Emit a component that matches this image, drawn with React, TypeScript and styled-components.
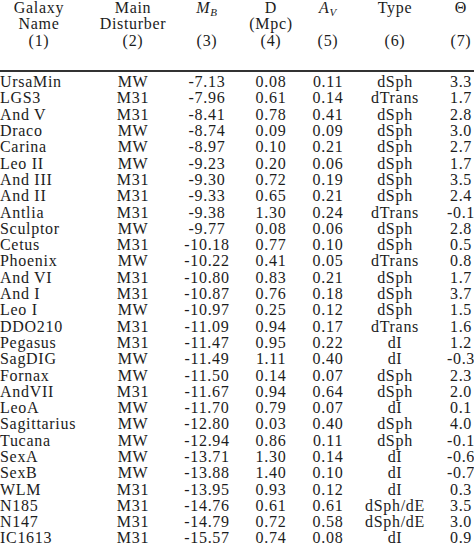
import React from "react";
import styled, { createGlobalStyle, css } from "styled-components";

type Galaxy = {
  name: string;
  host: string;
  mb: string;
  dist: string;
  av: string;
  type: string;
  theta: string;
};

const galaxies: Galaxy[] = [
  { name: "UrsaMin", host: "MW", mb: "-7.13", dist: "0.08", av: "0.11", type: "dSph", theta: "3.3" },
  { name: "LGS3", host: "M31", mb: "-7.96", dist: "0.61", av: "0.14", type: "dTrans", theta: "1.7" },
  { name: "And V", host: "M31", mb: "-8.41", dist: "0.78", av: "0.41", type: "dSph", theta: "2.8" },
  { name: "Draco", host: "MW", mb: "-8.74", dist: "0.09", av: "0.09", type: "dSph", theta: "3.0" },
  { name: "Carina", host: "MW", mb: "-8.97", dist: "0.10", av: "0.21", type: "dSph", theta: "2.7" },
  { name: "Leo II", host: "MW", mb: "-9.23", dist: "0.20", av: "0.06", type: "dSph", theta: "1.7" },
  { name: "And III", host: "M31", mb: "-9.30", dist: "0.72", av: "0.19", type: "dSph", theta: "3.5" },
  { name: "And II", host: "M31", mb: "-9.33", dist: "0.65", av: "0.21", type: "dSph", theta: "2.4" },
  { name: "Antlia", host: "M31", mb: "-9.38", dist: "1.30", av: "0.24", type: "dTrans", theta: "-0.1" },
  { name: "Sculptor", host: "MW", mb: "-9.77", dist: "0.08", av: "0.06", type: "dSph", theta: "2.8" },
  { name: "Cetus", host: "M31", mb: "-10.18", dist: "0.77", av: "0.10", type: "dSph", theta: "0.5" },
  { name: "Phoenix", host: "MW", mb: "-10.22", dist: "0.41", av: "0.05", type: "dTrans", theta: "0.8" },
  { name: "And VI", host: "M31", mb: "-10.80", dist: "0.83", av: "0.21", type: "dSph", theta: "1.7" },
  { name: "And I", host: "M31", mb: "-10.87", dist: "0.76", av: "0.18", type: "dSph", theta: "3.7" },
  { name: "Leo I", host: "MW", mb: "-10.97", dist: "0.25", av: "0.12", type: "dSph", theta: "1.5" },
  { name: "DDO210", host: "M31", mb: "-11.09", dist: "0.94", av: "0.17", type: "dTrans", theta: "1.6" },
  { name: "Pegasus", host: "M31", mb: "-11.47", dist: "0.95", av: "0.22", type: "dI", theta: "1.2" },
  { name: "SagDIG", host: "MW", mb: "-11.49", dist: "1.11", av: "0.40", type: "dI", theta: "-0.3" },
  { name: "Fornax", host: "MW", mb: "-11.50", dist: "0.14", av: "0.07", type: "dSph", theta: "2.3" },
  { name: "AndVII", host: "M31", mb: "-11.67", dist: "0.94", av: "0.64", type: "dSph", theta: "2.0" },
  { name: "LeoA", host: "MW", mb: "-11.70", dist: "0.79", av: "0.07", type: "dI", theta: "0.1" },
  { name: "Sagittarius", host: "MW", mb: "-12.80", dist: "0.03", av: "0.40", type: "dSph", theta: "4.0" },
  { name: "Tucana", host: "MW", mb: "-12.94", dist: "0.86", av: "0.11", type: "dSph", theta: "-0.1" },
  { name: "SexA", host: "MW", mb: "-13.71", dist: "1.30", av: "0.14", type: "dI", theta: "-0.6" },
  { name: "SexB", host: "MW", mb: "-13.88", dist: "1.40", av: "0.10", type: "dI", theta: "-0.7" },
  { name: "WLM", host: "M31", mb: "-13.95", dist: "0.93", av: "0.12", type: "dI", theta: "0.3" },
  { name: "N185", host: "M31", mb: "-14.76", dist: "0.61", av: "0.61", type: "dSph/dE", theta: "3.5" },
  { name: "N147", host: "M31", mb: "-14.79", dist: "0.72", av: "0.58", type: "dSph/dE", theta: "3.0" },
  { name: "IC1613", host: "M31", mb: "-15.57", dist: "0.74", av: "0.08", type: "dI", theta: "0.9" },
];

export default function App() {
  return (
    <>
      <GlobalStyle />
      <Page>
        <HeadGrid>
          <HeadCell $first>Galaxy</HeadCell>
          <HeadCell>Main</HeadCell>
          <HeadCell>
            <Var>M</Var>
            <Sub>B</Sub>
          </HeadCell>
          <HeadCell>D</HeadCell>
          <HeadCell>
            <Var>A</Var>
            <Sub>V</Sub>
          </HeadCell>
          <HeadCell>Type</HeadCell>
          <HeadCell>Θ</HeadCell>

          <HeadCell $first>Name</HeadCell>
          <HeadCell>Disturber</HeadCell>
          <HeadCell />
          <HeadCell>(Mpc)</HeadCell>
          <HeadCell />
          <HeadCell />
          <HeadCell />

          <HeadCell $first>(1)</HeadCell>
          <HeadCell>(2)</HeadCell>
          <HeadCell>(3)</HeadCell>
          <HeadCell>(4)</HeadCell>
          <HeadCell>(5)</HeadCell>
          <HeadCell>(6)</HeadCell>
          <HeadCell>(7)</HeadCell>
        </HeadGrid>

        <Rule />

        <BodyGrid>
          {galaxies.map((g) => (
            <React.Fragment key={g.name}>
              <Cell $left>{g.name}</Cell>
              <Cell>{g.host}</Cell>
              <Cell>{g.mb}</Cell>
              <Cell>{g.dist}</Cell>
              <Cell>{g.av}</Cell>
              <Cell>{g.type}</Cell>
              <Cell>{g.theta}</Cell>
            </React.Fragment>
          ))}
        </BodyGrid>
      </Page>
    </>
  );
}

const GlobalStyle = createGlobalStyle`
  html, body {
    margin: 0;
    padding: 0;
    background: #ffffff;
    overflow: hidden;
  }
  body {
    font-family: "Liberation Serif", "Times New Roman", serif;
    color: #1c1c1c;
  }
`;

const columns = css`
  display: grid;
  grid-template-columns: 83px 100px 48px 80px 34px 100px 32px;
  font-size: 16px;
  letter-spacing: 0.7px;
  white-space: nowrap;
`;

const Page = styled.div`
  width: 474px;
  height: 548px;
  overflow: hidden;
  background: #ffffff;
`;

const HeadGrid = styled.div`
  ${columns};
  grid-auto-rows: 16.4px;
  line-height: 16.4px;
`;

const HeadCell = styled.div<{ $first?: boolean }>`
  text-align: center;
  padding-right: ${(p) => (p.$first ? "5px" : "0")};
`;

const Var = styled.span`
  font-style: italic;
`;

const Sub = styled.span`
  font-style: italic;
  font-size: 11px;
  position: relative;
  top: 3px;
  line-height: 0;
`;

const Rule = styled.div`
  height: 2px;
  background: #333333;
  margin-top: 20.6px;
  margin-bottom: 2.4px;
  width: 100%;
`;

const BodyGrid = styled.div`
  ${columns};
  grid-auto-rows: 16.3px;
  line-height: 16.3px;
`;

const Cell = styled.div<{ $left?: boolean }>`
  text-align: ${(p) => (p.$left ? "left" : "center")};
`;
